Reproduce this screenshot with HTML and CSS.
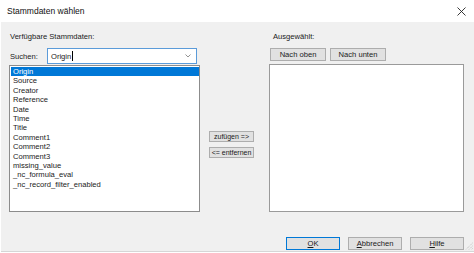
FILE: index.html
```html
<!DOCTYPE html>
<html lang="de">

<head>
    <meta charset="UTF-8">
    <title>Stammdaten wählen</title>
    <link rel="stylesheet" href="styles.css">
</head>

<body>
    <div class="window">
        <div class="titlebar">
            <span class="title">Stammdaten wählen</span>
            <svg class="close" width="9" height="9" viewBox="0 0 9 9">
                <path d="M0.5 0.5 L8.5 8.5 M8.5 0.5 L0.5 8.5" stroke="#222" stroke-width="0.9" fill="none"/>
            </svg>
        </div>

        <div class="dialog">
            <div class="panes">
                <div class="col-left">
                    <div class="label">Verfügbare Stammdaten:</div>
                    <div class="search-row">
                        <span class="search-label">Suchen:</span>
                        <div class="combo">
                            <span class="combo-text">Origin<span class="caret"></span></span>
                            <svg class="chevron" width="6" height="4" viewBox="0 0 6 4">
                                <path d="M0.5 0.5 L3 3 L5.5 0.5" stroke="#777" stroke-width="0.8" fill="none"/>
                            </svg>
                        </div>
                    </div>
                    <ul class="listbox">
                        <li class="selected">Origin</li>
                        <li>Source</li>
                        <li>Creator</li>
                        <li>Reference</li>
                        <li>Date</li>
                        <li>Time</li>
                        <li>Title</li>
                        <li>Comment1</li>
                        <li>Comment2</li>
                        <li>Comment3</li>
                        <li>missing_value</li>
                        <li>_nc_formula_eval</li>
                        <li>_nc_record_filter_enabled</li>
                    </ul>
                </div>

                <div class="col-mid">
                    <button class="btn small">zufügen =&gt;</button>
                    <button class="btn small">&lt;= entfernen</button>
                </div>

                <div class="col-right">
                    <div class="label indent">Ausgewählt:</div>
                    <div class="order-row">
                        <button class="btn order">Nach oben</button>
                        <button class="btn order">Nach unten</button>
                    </div>
                    <ul class="listbox right"></ul>
                </div>
            </div>

            <div class="footer">
                <button class="btn foot default"><u>O</u>K</button>
                <button class="btn foot"><u>A</u>bbrechen</button>
                <button class="btn foot"><u>H</u>ilfe</button>
            </div>

            <svg class="grip" width="8" height="8" viewBox="0 0 8 8">
                <path d="M7.5 1 L1 7.5 M7.5 4 L4 7.5 M7.5 6.5 L6.5 7.5" stroke="#aaa" stroke-width="0.8" stroke-dasharray="1 1" fill="none"/>
            </svg>
        </div>
    </div>
</body>

</html>
```

FILE: styles.css
```css
* {
    box-sizing: border-box;
}

body {
    margin: 0;
    font-family: "Liberation Sans", Arial, sans-serif;
    font-size: 7.6px;
    color: #1a1a1a;
    background: #fff;
}

.window {
    width: 474px;
    height: 253px;
    display: flex;
    flex-direction: column;
}

.titlebar {
    height: 22px;
    background: #fff;
    display: flex;
    align-items: center;
    justify-content: space-between;
    padding: 0 8px 0 7px;
}

.title {
    font-size: 8.5px;
    color: #111;
}

.close {
    display: block;
}

.dialog {
    position: relative;
    flex: 1;
    background: #f0f0f0;
    margin-left: 1px;
    border-bottom: 1px solid #d6d6d6;
    margin-bottom: 1px;
    display: flex;
    flex-direction: column;
    padding: 0 10px 0 8px;
}

.panes {
    display: flex;
}

.label {
    height: 10px;
    line-height: 10px;
    margin-top: 10px;
    padding-left: 1px;
}

.label.indent {
    padding-left: 4px;
}

.col-left {
    width: 191px;
    display: flex;
    flex-direction: column;
}

.search-row {
    display: flex;
    align-items: center;
    margin-top: 6px;
    height: 16px;
}

.search-label {
    width: 38px;
    padding-left: 1px;
}

.combo {
    width: 150px;
    height: 16px;
    background: #fff;
    border: 1px solid #5b9bd9;
    display: flex;
    align-items: center;
    justify-content: space-between;
    padding: 0 5px 0 3px;
}

.combo-text {
    display: flex;
    align-items: center;
}

.caret {
    display: inline-block;
    width: 1px;
    height: 10px;
    background: #000;
    margin-left: 1px;
}

.chevron {
    display: block;
}

.listbox {
    list-style: none;
    margin: 1px 0 0 0;
    padding: 1px;
    height: 147px;
    background: #fff;
    border: 1px solid #8c8c8c;
}

.listbox li {
    height: 9.4px;
    line-height: 9.4px;
    padding-left: 2px;
    white-space: nowrap;
}

.listbox li.selected {
    background: #0078d7;
    color: #fff;
    width: 188px;
}

.col-mid {
    width: 69px;
    display: flex;
    flex-direction: column;
    align-items: flex-start;
    padding: 109px 0 0 9px;
    gap: 5px;
}

.btn {
    font-family: "Liberation Sans", Arial, sans-serif;
    font-size: 7.6px;
    color: #1a1a1a;
    background: #e1e1e1;
    border: 1px solid #adadad;
    padding: 0;
    white-space: nowrap;
    display: flex;
    align-items: center;
    justify-content: center;
}

.btn.small {
    width: 45px;
    height: 11px;
    font-size: 7px;
}

.col-right {
    flex: 1;
    display: flex;
    flex-direction: column;
}

.order-row {
    display: flex;
    gap: 4px;
    margin-top: 6px;
    padding-left: 1px;
}

.btn.order {
    width: 56px;
    height: 13px;
}

.listbox.right {
    margin-top: 3px;
    height: 148px;
    border-color: #9a9a9a;
}

.footer {
    display: flex;
    justify-content: flex-end;
    gap: 8px;
    margin-top: 25px;
}

.btn.foot {
    width: 54px;
    height: 13px;
}

.btn.default {
    border: 1px solid #0078d7;
}

.grip {
    position: absolute;
    right: 1px;
    bottom: 1px;
}
```
